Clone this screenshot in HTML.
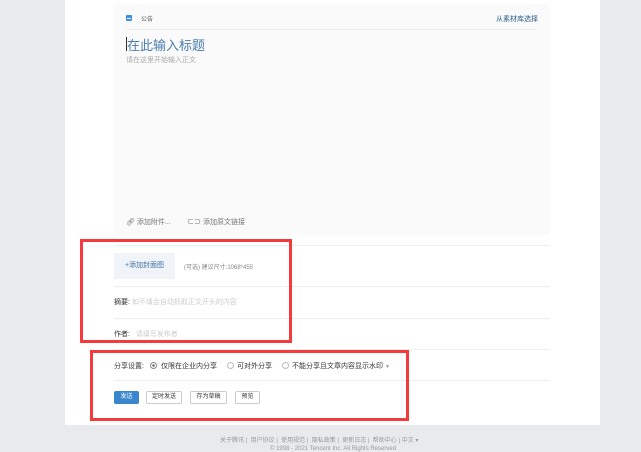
<!DOCTYPE html>
<html><head><meta charset="utf-8"><style>
*{margin:0;padding:0;box-sizing:border-box}
body{width:641px;height:452px;background:#e9eaec;font-family:"Liberation Sans","Noto Sans CJK SC",sans-serif;position:relative;overflow:hidden;font-size:7px;color:#333}
.a{position:absolute;white-space:nowrap}
.panel{left:65px;top:0;width:535px;height:425px;background:#fff}
.ed{left:114px;top:4px;width:436px;height:231px;background:#fafafa}
.line{height:1px;background:#eee;left:114px;width:436px}
.red{border:3px solid #f43a3d}
.btn{border:1px solid #ccc;border-radius:2px;height:13px;line-height:11px;text-align:center;font-size:6px;color:#333;background:#fff}
.radio{width:7px;height:7px;border:1px solid #bbb;border-radius:50%;position:absolute}
</style></head><body>
<div class="a panel"></div>
<div class="a ed"></div>
<div class="a" style="left:126px;top:15px;width:6px;height:6px;background:#3a8ee6;border-radius:1px"></div>
<div class="a" style="left:127px;top:18px;width:4px;height:1px;background:#fff"></div>
<div class="a" style="left:141px;top:14px;font-size:6px;color:#555">公告</div>
<div class="a" style="left:496px;top:14px;font-size:7px;color:#2b5e8c">从素材库选择</div>
<div class="a" style="left:126px;top:29px;width:410px;height:1px;background:#eee"></div>
<div class="a" style="left:126px;top:37px;width:1px;height:14px;background:#333"></div>
<div class="a" style="left:127px;top:35px;font-size:13px;color:#4a7db0">在此输入标题</div>
<div class="a" style="left:126px;top:55px;font-size:7px;color:#aaa">请在这里开始输入正文</div>
<div class="a" style="left:126px;top:217px;font-size:7px;color:#777">🔗&#xFE0E; 添加附件...</div>
<div class="a" style="left:187px;top:217px;font-size:7px;color:#777">⊂⊃ 添加原文链接</div>
<div class="a line" style="top:245px"></div>
<div class="a" style="left:114px;top:253px;width:61px;height:26px;background:#f0f4f8;color:#3a6ea5;font-size:7px;line-height:26px;text-align:center">+添加封面图</div>
<div class="a" style="left:184px;top:262px;font-size:6px;color:#888">(可选) 建议尺寸:1068*455</div>
<div class="a line" style="top:286px"></div>
<div class="a" style="left:114px;top:297px;font-size:7px;color:#333">摘要: <span style="color:#ccc">如不填会自动抓取正文开头的内容</span></div>
<div class="a line" style="top:318px"></div>
<div class="a" style="left:114px;top:329px;font-size:7px;color:#333">作者: &nbsp; <span style="color:#ccc">请填写发布者</span></div>
<div class="a line" style="top:349px"></div>
<div class="a" style="left:114px;top:361px;font-size:7px;color:#333">分享设置:</div>
<div class="radio" style="left:150px;top:362px;border-color:#888;background:radial-gradient(#666 30%,#fff 40%)"></div>
<div class="a" style="left:161px;top:361px;font-size:7px">仅限在企业内分享</div>
<div class="radio" style="left:227px;top:362px"></div>
<div class="a" style="left:237px;top:361px;font-size:7px">可对外分享</div>
<div class="radio" style="left:282px;top:362px"></div>
<div class="a" style="left:292px;top:361px;font-size:7px">不能分享且文章内容显示水印 <span style="color:#999;font-size:5px">▼</span></div>
<div class="a line" style="top:380px"></div>
<div class="a btn" style="left:114px;top:391px;width:25px;background:#3a86cc;border-color:#3a86cc;color:#fff">发送</div>
<div class="a btn" style="left:146px;top:391px;width:36px">定时发送</div>
<div class="a btn" style="left:190px;top:391px;width:37px">存为草稿</div>
<div class="a btn" style="left:235px;top:391px;width:25px">预览</div>
<div class="a red" style="left:80px;top:239px;width:212px;height:104px"></div>
<div class="a red" style="left:90px;top:350px;width:319px;height:71px"></div>
<div class="a" style="left:220px;top:435px;font-size:6px;color:#999">关于腾讯 | &nbsp;用户协议 | &nbsp;使用规范 | &nbsp;隐私政策 | &nbsp;更新日志 | &nbsp;帮助中心 | 中文 ▾</div>
<div class="a" style="left:270px;top:446px;font-size:6px;color:#999">© 1998 - 2021 Tencent Inc. All Rights Reserved</div>
</body></html>
